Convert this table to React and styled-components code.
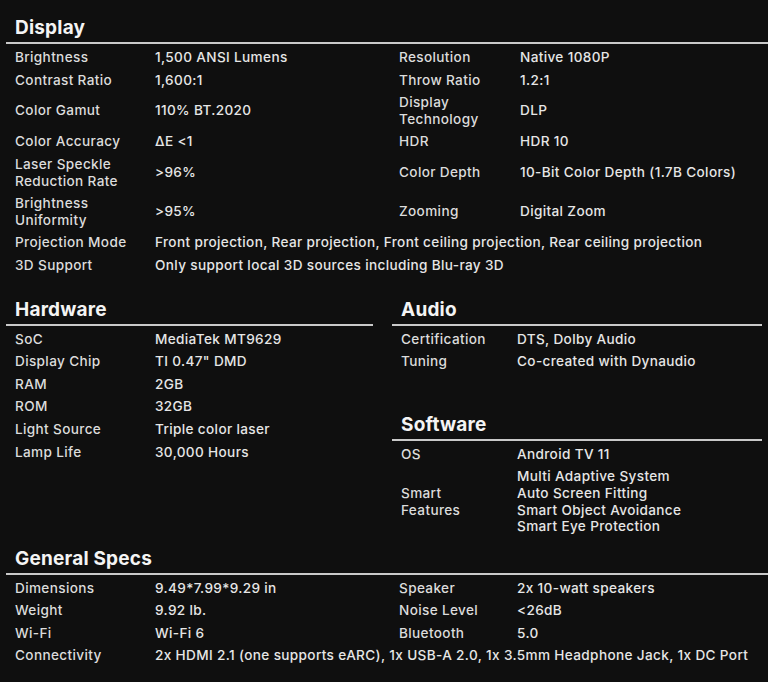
import styled, { createGlobalStyle } from "styled-components";

const GlobalStyle = createGlobalStyle`
  html, body {
    margin: 0;
    padding: 0;
    background: #0f0f0f;
  }
  body {
    font-family: Inter, "Liberation Sans", sans-serif;
    font-feature-settings: "calt" 0;
  }
`;

const Page = styled.div`
  width: 768px;
  height: 682px;
  overflow: hidden;
  box-sizing: border-box;
  padding: 16px 0 0 6px;
  background: #0f0f0f;
  color: #e2e2e2;
`;

const Section = styled.section`
  margin-top: ${(p) => p.$top || 0}px;
`;

const Heading = styled.h2`
  margin: 0;
  padding: 0 0 2px 9px;
  font-size: 19px;
  line-height: 24px;
  font-weight: 700;
  letter-spacing: 0.2px;
  color: #f4f4f4;
  border-bottom: 2px solid #c9c9c9;
`;

const Table = styled.div`
  display: grid;
  grid-template-columns: ${(p) => p.$cols};
  margin-top: 2px;
`;

const Cell = styled.div`
  padding: 3px 0 3px 9px;
  font-size: 13.6px;
  line-height: 16.6px;
  font-weight: 500;
  letter-spacing: 0.35px;
  color: ${(p) => (p.$label ? "#dcdcdc" : "#e6e6e6")};
  display: flex;
  flex-direction: column;
  justify-content: center;
  grid-column: ${(p) => (p.$span ? `span ${p.$span}` : "auto")};
  white-space: nowrap;
`;

const Columns = styled.div`
  display: grid;
  grid-template-columns: 367px 370px;
  column-gap: 19px;
  margin-top: 21px;
`;

const display = [
  ["Brightness", "1,500 ANSI Lumens", "Resolution", "Native 1080P"],
  ["Contrast Ratio", "1,600:1", "Throw Ratio", "1.2:1"],
  ["Color Gamut", "110% BT.2020", ["Display", "Technology"], "DLP"],
  ["Color Accuracy", "ΔE <1", "HDR", "HDR 10"],
  [["Laser Speckle", "Reduction Rate"], ">96%", "Color Depth", "10-Bit Color Depth (1.7B Colors)"],
  [["Brightness", "Uniformity"], ">95%", "Zooming", "Digital Zoom"],
  ["Projection Mode", "Front projection, Rear projection, Front ceiling projection, Rear ceiling projection"],
  ["3D Support", "Only support local 3D sources including Blu-ray 3D"],
];

const hardware = [
  ["SoC", "MediaTek MT9629"],
  ["Display Chip", "TI 0.47\" DMD"],
  ["RAM", "2GB"],
  ["ROM", "32GB"],
  ["Light Source", "Triple color laser"],
  ["Lamp Life", "30,000 Hours"],
];

const audio = [
  ["Certification", "DTS, Dolby Audio"],
  ["Tuning", "Co-created with Dynaudio"],
];

const software = [
  ["OS", "Android TV 11"],
  [
    ["Smart", "Features"],
    ["Multi Adaptive System", "Auto Screen Fitting", "Smart Object Avoidance", "Smart Eye Protection"],
  ],
];

const general = [
  ["Dimensions", "9.49*7.99*9.29 in", "Speaker", "2x 10-watt speakers"],
  ["Weight", "9.92 lb.", "Noise Level", "<26dB"],
  ["Wi-Fi", "Wi-Fi 6", "Bluetooth", "5.0"],
  ["Connectivity", "2x HDMI 2.1 (one supports eARC), 1x USB-A 2.0, 1x 3.5mm Headphone Jack, 1x DC Port"],
];

const Text = ({ value }) =>
  Array.isArray(value) ? value.map((v) => <span key={v}>{v}</span>) : value;

const SpecTable = ({ rows, cols, wide }) => (
  <Table $cols={cols}>
    {rows.map((row, i) =>
      row.map((value, j) => (
        <Cell
          key={`${i}-${j}`}
          $label={j % 2 === 0}
          $span={wide && row.length === 2 && j === 1 ? 3 : 0}
        >
          <Text value={value} />
        </Cell>
      ))
    )}
  </Table>
);

export default function App() {
  return (
    <Page>
      <GlobalStyle />
      <Section>
        <Heading>Display</Heading>
        <SpecTable rows={display} cols="140px 244px 121px 1fr" wide />
      </Section>
      <Columns>
        <Section>
          <Heading>Hardware</Heading>
          <SpecTable rows={hardware} cols="140px 1fr" />
        </Section>
        <div>
          <Section>
            <Heading>Audio</Heading>
            <SpecTable rows={audio} cols="116px 1fr" />
          </Section>
          <Section $top={40}>
            <Heading>Software</Heading>
            <SpecTable rows={software} cols="116px 1fr" />
          </Section>
        </div>
      </Columns>
      <Section $top={9}>
        <Heading>General Specs</Heading>
        <SpecTable rows={general} cols="140px 244px 118px 1fr" wide />
      </Section>
    </Page>
  );
}
